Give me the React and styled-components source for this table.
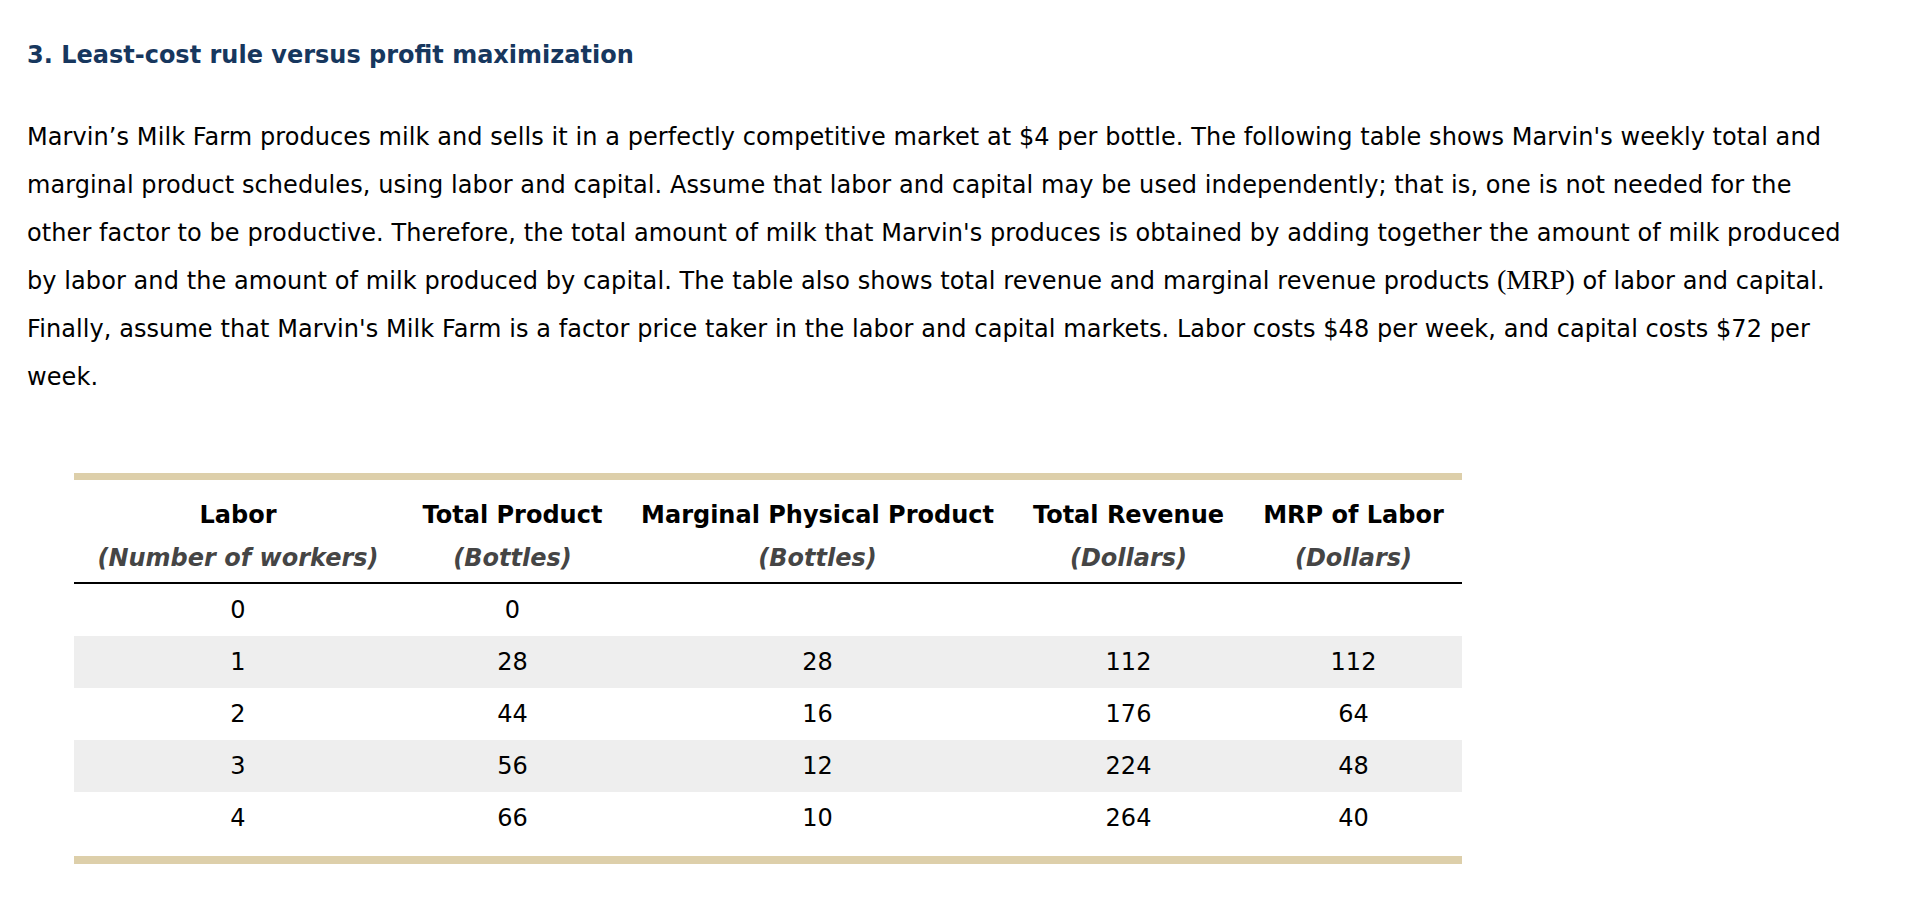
import React from "react";
import styled, { createGlobalStyle } from "styled-components";

const Global = createGlobalStyle`
  html, body { margin: 0; padding: 0; background: #ffffff; }
  body { font-family: "DejaVu Sans", Verdana, sans-serif; color: #000; }
`;

const Page = styled.main`
  padding: 40px 0 0 27px;
  width: 1820px;
`;

const Heading = styled.h2`
  margin: 0;
  font-size: 24px;
  line-height: 30px;
  font-weight: bold;
  color: #17375e;
`;

const Paragraph = styled.p`
  margin: 43px 0 0;
  font-size: 24px;
  letter-spacing: 0.08px;
  line-height: 48px;
  color: #000;
`;

const Math = styled.span`
  font-family: "Liberation Serif", "Times New Roman", serif;
  font-size: 28px;
  line-height: 0;
  letter-spacing: 0;
`;

const TableFrame = styled.div`
  margin: 72px 0 0 47px;
  width: 1388px;
  border-top: 7px solid #ddcfaa;
  border-bottom: 8px solid #ddcfaa;
  padding-bottom: 12px;
`;

const Table = styled.table`
  width: 100%;
  border-collapse: collapse;
  table-layout: fixed;
  font-size: 24px;
`;

const HeadCell = styled.th`
  padding: 14px 0 2px;
  text-align: center;
  vertical-align: top;
  border-bottom: 2px solid #000;
  font-weight: bold;
  line-height: 43px;
  color: #000;
`;

const Title = styled.div`
  white-space: nowrap;
`;

const Unit = styled.div`
  font-style: italic;
  color: #454545;
  white-space: nowrap;
`;

const Row = styled.tr`
  background: ${(p) => (p.$shaded ? "#eeeeee" : "#ffffff")};
`;

const Cell = styled.td`
  height: 52px;
  padding: 0;
  text-align: center;
  vertical-align: middle;
  line-height: 28px;
`;

const columns = [
  { title: "Labor", unit: "(Number of workers)", width: 328 },
  { title: "Total Product", unit: "(Bottles)", width: 221 },
  { title: "Marginal Physical Product", unit: "(Bottles)", width: 389 },
  { title: "Total Revenue", unit: "(Dollars)", width: 233 },
  { title: "MRP of Labor", unit: "(Dollars)", width: 217 },
];

const rows = [
  ["0", "0", "", "", ""],
  ["1", "28", "28", "112", "112"],
  ["2", "44", "16", "176", "64"],
  ["3", "56", "12", "224", "48"],
  ["4", "66", "10", "264", "40"],
];

export default function App() {
  return (
    <>
      <Global />
      <Page>
        <Heading>3. Least-cost rule versus profit maximization</Heading>
        <Paragraph>
          Marvin’s Milk Farm produces milk and sells it in a perfectly competitive market at $4 per bottle. The
          following table shows Marvin's weekly total and marginal product schedules, using labor and capital.
          Assume that labor and capital may be used independently; that is, one is not needed for the other factor
          to be productive. Therefore, the total amount of milk that Marvin's produces is obtained by adding
          together the amount of milk produced by labor and the amount of milk produced by capital. The table also
          shows total revenue and marginal revenue products <Math>(MRP)</Math> of labor and capital. Finally, assume
          that Marvin's Milk Farm is a factor price taker in the labor and capital markets. Labor costs $48 per
          week, and capital costs $72 per week.
        </Paragraph>
        <TableFrame>
          <Table>
            <colgroup>
              {columns.map((c) => (
                <col key={c.title} style={{ width: c.width }} />
              ))}
            </colgroup>
            <thead>
              <tr>
                {columns.map((c) => (
                  <HeadCell key={c.title}>
                    <Title>{c.title}</Title>
                    <Unit>{c.unit}</Unit>
                  </HeadCell>
                ))}
              </tr>
            </thead>
            <tbody>
              {rows.map((r, i) => (
                <Row key={i} $shaded={i % 2 === 1}>
                  {r.map((v, j) => (
                    <Cell key={j}>{v}</Cell>
                  ))}
                </Row>
              ))}
            </tbody>
          </Table>
        </TableFrame>
      </Page>
    </>
  );
}
